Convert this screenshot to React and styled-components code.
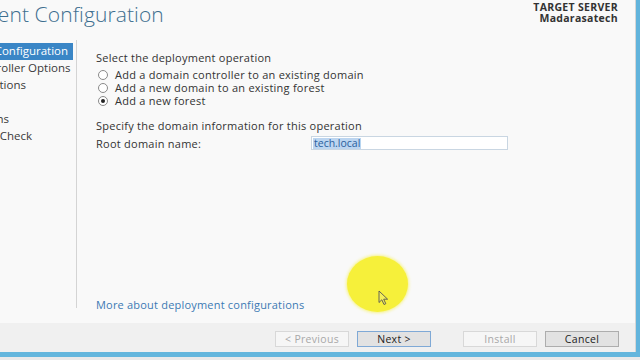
import React from "react";
import styled, { createGlobalStyle } from "styled-components";

const GlobalStyle = createGlobalStyle`
  html, body { margin: 0; padding: 0; background: #f9f9f9; overflow: hidden; }
  body { font-family: "Open Sans", "Noto Sans", "Liberation Sans", sans-serif; }
`;

const SHIFT = 90;

const Screen = styled.div`
  position: relative;
  width: 640px;
  height: 360px;
  overflow: hidden;
  display: flex;
  flex-direction: column;
  background: #e9e9e9;
`;

const Window = styled.div`
  height: 352px;
  flex-shrink: 0;
  display: flex;
  flex-direction: row;
  border-bottom: 5px solid #64b6dd;
`;

const Inner = styled.div`
  flex: 1;
  margin-left: -${SHIFT}px;
  display: flex;
  flex-direction: column;
  background: #f9f9f9;
  border-right: 1px solid #d6d6d6;
`;

const RightEdge = styled.div`
  width: 4px;
  background: #62b4dc;
`;

const Header = styled.div`
  height: 40px;
  flex-shrink: 0;
  display: flex;
  justify-content: space-between;
  align-items: flex-start;
  padding: 0 17px 0 3px;
`;

const Title = styled.h1`
  margin: 0;
  font-weight: 300;
  font-size: 21px;
  line-height: 28px;
  color: #3d6e8f;
  letter-spacing: 0.1px;
`;

const Target = styled.div`
  text-align: right;
  padding-top: 2px;
  font-size: 10.5px;
  line-height: 11px;
  font-weight: 700;
  color: #333;
  letter-spacing: 0.3px;
`;

const Body = styled.div`
  height: 283px;
  flex-shrink: 0;
  display: flex;
  align-items: flex-start;
`;

const Sidebar = styled.div`
  width: ${SHIFT + 73}px;
  padding-top: 3px;
  display: flex;
  flex-direction: column;
  margin-right: 3px;
`;

const NavItem = styled.div`
  height: 17px;
  line-height: 16px;
  padding-left: 16px;
  font-size: 11.5px;
  white-space: nowrap;
  color: ${(p) => (p.$active ? "#fff" : "#3a3a3a")};
  background: ${(p) => (p.$active ? "#3a86c6" : "transparent")};
`;

const Divider = styled.div`
  width: 1px;
  height: 268px;
  background: #d4d4d4;
`;

const Content = styled.div`
  flex: 1;
  align-self: stretch;
  padding: 11px 0 12px 19px;
  display: flex;
  flex-direction: column;
  font-size: 11px;
  letter-spacing: 0.25px;
  color: #333;
`;

const Label = styled.div`
  line-height: 13px;
  margin-bottom: ${(p) => p.$mb || 0}px;
  margin-top: ${(p) => p.$mt || 0}px;
`;

const RadioRow = styled.label`
  display: flex;
  align-items: center;
  height: 13px;
  gap: 7px;
  padding-left: 2px;
`;

const Radio = styled.span`
  width: 8px;
  height: 8px;
  border: 1px solid #8a8a8a;
  border-radius: 50%;
  background: #fff;
  display: flex;
  align-items: center;
  justify-content: center;
  &::after {
    content: "";
    width: 4px;
    height: 4px;
    border-radius: 50%;
    background: ${(p) => (p.$checked ? "#222" : "transparent")};
  }
`;

const FieldRow = styled.div`
  display: flex;
  align-items: center;
  height: 14px;
  margin-top: 4px;
`;

const FieldLabel = styled.div`
  width: 215px;
`;

const Input = styled.div`
  width: 194px;
  height: 12px;
  border: 1px solid #c9d6e2;
  background: #fff;
  display: flex;
  align-items: center;
  padding-left: 1px;
`;

const Selected = styled.span`
  background: #bcd5f0;
  color: #2a5f9e;
  font-size: 10.5px;
  line-height: 11px;
  letter-spacing: 0;
  padding: 0 1px;
`;

const Spacer = styled.div`
  flex: 1;
`;

const Link = styled.a`
  color: #3c79b4;
  font-size: 11px;
  line-height: 13px;
  letter-spacing: 0.2px;
  text-decoration: none;
`;

const Footer = styled.div`
  flex: 1;
  background: #f0f0f0;
  display: flex;
  align-items: flex-start;
  justify-content: flex-end;
  padding: 8px 16px 0 0;
`;

const Button = styled.button`
  width: 74px;
  height: 16px;
  margin-left: ${(p) => p.$gap || 8}px;
  padding: 0;
  font-family: inherit;
  font-size: 10.5px;
  line-height: 14px;
  letter-spacing: 0.3px;
  color: ${(p) => (p.$disabled ? "#a8a8a8" : "#222")};
  background: ${(p) => (p.$disabled ? "#f6f6f6" : "#e2e2e2")};
  border: 1px solid ${(p) => (p.$focus ? "#7fa9d6" : p.$disabled ? "#d8d8d8" : "#adadad")};
`;

const Spot = styled.div`
  position: absolute;
  left: 347px;
  top: 256px;
  width: 61px;
  height: 56px;
  border-radius: 50%;
  background: #f6f03a;
  box-shadow: 0 0 3px 1px rgba(246, 240, 58, 0.6);
`;

const Cursor = styled.svg`
  position: absolute;
  left: 378px;
  top: 290px;
`;

export default function App() {
  return (
    <>
      <GlobalStyle />
      <Screen>
        <Window>
          <Inner>
            <Header>
              <Title>Deployment Configuration</Title>
              <Target>
                TARGET SERVER
                <br />
                Madarasatech
              </Target>
            </Header>
            <Body>
              <Sidebar>
                <NavItem $active>Deployment Configuration</NavItem>
                <NavItem>Domain Controller Options</NavItem>
                <NavItem>Additional Options</NavItem>
                <NavItem>Paths</NavItem>
                <NavItem>Review Options</NavItem>
                <NavItem>Prerequisites Check</NavItem>
              </Sidebar>
              <Divider />
              <Content>
                <Label $mb={4}>Select the deployment operation</Label>
                <RadioRow>
                  <Radio />
                  Add a domain controller to an existing domain
                </RadioRow>
                <RadioRow>
                  <Radio />
                  Add a new domain to an existing forest
                </RadioRow>
                <RadioRow>
                  <Radio $checked />
                  Add a new forest
                </RadioRow>
                <Label $mt={12}>
                  Specify the domain information for this operation
                </Label>
                <FieldRow>
                  <FieldLabel>Root domain name:</FieldLabel>
                  <Input>
                    <Selected>tech.local</Selected>
                  </Input>
                </FieldRow>
                <Spacer />
                <Link href="#">More about deployment configurations</Link>
              </Content>
            </Body>
            <Footer>
              <Button $disabled>&lt; Previous</Button>
              <Button $focus>Next &gt;</Button>
              <Button $disabled $gap={32}>Install</Button>
              <Button>Cancel</Button>
            </Footer>
          </Inner>
          <RightEdge />
        </Window>
        <Spot />
        <Cursor width="12" height="16" viewBox="0 0 12 16">
          <path
            d="M1 1 L1 12.5 L3.8 9.8 L6 14.5 L7.8 13.7 L5.7 9.2 L9.6 9.2 Z"
            fill="#f3ee5a"
            stroke="#555"
            strokeWidth="0.9"
            strokeLinejoin="round"
          />
        </Cursor>
      </Screen>
    </>
  );
}
